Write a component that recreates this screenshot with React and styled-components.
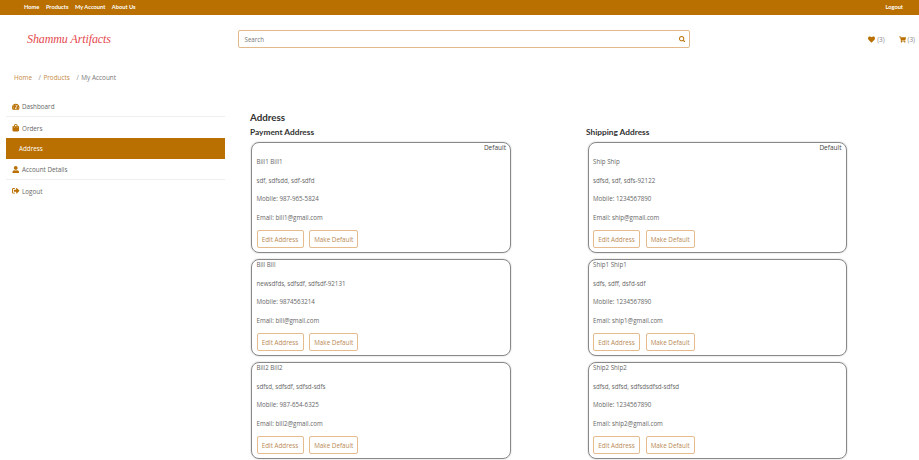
import React from "react";
import styled, { createGlobalStyle } from "styled-components";
import { FaHeart, FaShoppingCart, FaSearch, FaShoppingBag, FaUser, FaSignOutAlt, FaTachometerAlt } from "react-icons/fa";

const Global = createGlobalStyle`
  html, body { margin: 0; padding: 0; background: #fff; }
  body { font-family: "Open Sans", "Noto Sans", sans-serif; color: #555; overflow: hidden; }
  * { box-sizing: border-box; }
`;
const Page = styled.div`width: 919px; height: 460px; overflow: hidden; display: flex; flex-direction: column;`;
const TopBar = styled.div`height: 15px; flex: none; background: #b97000; color: #fff; display: flex; align-items: center; justify-content: space-between; padding: 0 16px 2px 24px; font-family: Lato, "Open Sans", sans-serif; font-size: 5.7px; font-weight: 700;`;
const TopLinks = styled.div`display: flex; gap: 6.5px;`;
const Header = styled.div`height: 47px; flex: none; display: flex; align-items: center; padding: 1px 4px 0 27px;`;
const Logo = styled.div`width: 211px; flex: none; font-family: "Liberation Serif", serif; font-style: italic; font-size: 12px; color: #e5484d; letter-spacing: -0.1px;`;
const SearchBox = styled.div`width: 452px; height: 18px; flex: none; border: 1px solid #e2b98a; border-radius: 2px; display: flex; align-items: center; justify-content: space-between; padding: 0 4px 0 5.5px; font-size: 6.2px; color: #777;`;
const Counters = styled.div`margin-left: auto; display: flex; gap: 14px; font-size: 6.4px;`;
const Counter = styled.span`display: flex; align-items: center; gap: 2px; color: #888; svg { color: #b97000; font-size: 7px; }`;
const Crumbs = styled.div`height: 30px; flex: none; display: flex; align-items: center; gap: 6.5px; padding-left: 14px; font-size: 6.4px; color: #777;`;
const Crumb = styled.span`color: #c58a45;`;
const Sep = styled.span`color: #888; margin-right: -4px;`;
const Body = styled.div`flex: 1; display: flex; min-height: 0;`;
const Side = styled.div`width: 219px; margin-left: 6px; padding-top: 4px; flex: none;`;
const Item = styled.div`height: 21px; display: flex; align-items: center; gap: 2.5px; font-size: 6.3px; color: #666; padding: ${p => p.$active ? "0 0 0 13px" : "1px 0 0 6px"}; background: ${p => p.$active ? "#b97000" : "transparent"}; ${p => p.$active ? "color:#fff;" : ""} border-bottom: ${p => p.$line ? "1px solid #eee" : "0"}; svg { color: #b97000; font-size: 7.5px; }`;
const Main = styled.div`flex: 1; padding: 18px 0 0 25px; min-width: 0;`;
const Title = styled.div`font-family: Lato, "Open Sans", sans-serif; font-size: 9.8px; font-weight: 700; color: #333; line-height: 14px;`;
const Cols = styled.div`display: flex; gap: 75px; padding-top: 2px;`;
const Col = styled.div`width: 261px;`;
const ColTitle = styled.div`font-family: Lato, "Open Sans", sans-serif; font-size: 8.3px; font-weight: 700; color: #333; line-height: 12px; margin-bottom: 4px;`;
const Cards = styled.div`display: flex; flex-direction: column; gap: 5.5px; padding-left: ${p => p.$inset}px;`;
const Card = styled.div`position: relative; height: ${p => p.$h}px; border: 1px solid #888; border-radius: 8px; padding: ${p => p.$top}px 5px 0 4.5px; box-shadow: 0 0 1.5px #aaa; width: ${p => p.$w}px;`;
const Badge = styled.span`position: absolute; right: 4px; top: 0; font-size: 6.5px; color: #444;`;
const Line = styled.div`font-size: 6.2px; line-height: 9px; color: #666; margin-bottom: 9.5px;`;
const Actions = styled.div`display: flex; gap: 5.5px; margin-top: -1px;`;
const Btn = styled.span`height: 18px; padding: 0 4.2px; border: 1px solid #e6bb8e; border-radius: 2px; display: flex; align-items: center; font-size: 6.3px; color: #b98a55;`;

const payment = [
  { t: "Bill1 Bill1", a: "sdf, sdfsdd, sdf-sdfd", m: "987-965-5824", e: "bill1@gmail.com", d: true },
  { t: "Bill Bill", a: "newsdfds, sdfsdf, sdfsdf-92131", m: "9874563214", e: "bill@gmail.com" },
  { t: "Bill2 Bill2", a: "sdfsd, sdfsdf, sdfsd-sdfs", m: "987-654-6325", e: "bill2@gmail.com" },
];
const shipping = [
  { t: "Ship Ship", a: "sdfsd, sdf, sdfs-92122", m: "1234567890", e: "ship@gmail.com", d: true },
  { t: "Ship1 Ship1", a: "sdfs, sdff, dsfd-sdf", m: "1234567890", e: "ship1@gmail.com" },
  { t: "Ship2 Ship2", a: "sdfsd, sdfsd, sdfsdsdfsd-sdfsd", m: "1234567890", e: "ship2@gmail.com" },
];

function AddressCard({ x, w }) {
  return (
    <Card $h={x.d ? 111 : 97.5} $top={x.d ? 14 : 0.5} $w={w}>
      {x.d && <Badge>Default</Badge>}
      <Line>{x.t}</Line>
      <Line>{x.a}</Line>
      <Line>Mobile: {x.m}</Line>
      <Line>Email: {x.e}</Line>
      <Actions><Btn>Edit Address</Btn><Btn>Make Default</Btn></Actions>
    </Card>
  );
}

export default function App() {
  return (
    <Page>
      <Global />
      <TopBar>
        <TopLinks><span>Home</span><span>Products</span><span>My Account</span><span>About Us</span></TopLinks>
        <span>Logout</span>
      </TopBar>
      <Header>
        <Logo>Shammu Artifacts</Logo>
        <SearchBox><span>Search</span><FaSearch color="#b97000" size={6.5} /></SearchBox>
        <Counters>
          <Counter><FaHeart />(3)</Counter>
          <Counter><FaShoppingCart />(3)</Counter>
        </Counters>
      </Header>
      <Crumbs><Crumb>Home</Crumb><Sep>/</Sep><Crumb>Products</Crumb><Sep>/</Sep><span>My Account</span></Crumbs>
      <Body>
        <Side>
          <Item $line><FaTachometerAlt />Dashboard</Item>
          <Item><FaShoppingBag />Orders</Item>
          <Item $active>Address</Item>
          <Item $line><FaUser />Account Details</Item>
          <Item><FaSignOutAlt />Logout</Item>
        </Side>
        <Main>
          <Title>Address</Title>
          <Cols>
            <Col>
              <ColTitle>Payment Address</ColTitle>
              <Cards $inset={1}>{payment.map(x => <AddressCard key={x.t} x={x} w={260} />)}</Cards>
            </Col>
            <Col>
              <ColTitle>Shipping Address</ColTitle>
              <Cards $inset={1.5}>{shipping.map(x => <AddressCard key={x.t} x={x} w={259} />)}</Cards>
            </Col>
          </Cols>
        </Main>
      </Body>
    </Page>
  );
}
